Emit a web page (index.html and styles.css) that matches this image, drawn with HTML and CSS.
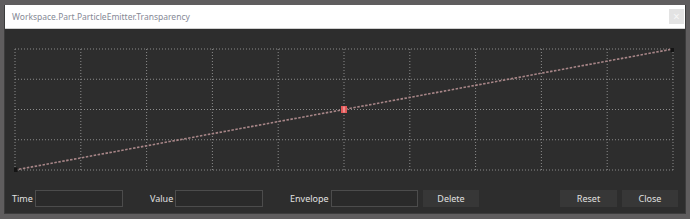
FILE: index.html
```html
<!DOCTYPE html>
<html lang="en">
<head>
    <meta charset="UTF-8">
    <title>Workspace.Part.ParticleEmitter.Transparency</title>
    <link rel="stylesheet" href="styles.css">
</head>
<body>
    <div class="dialog">
        <div class="titlebar">
            <span class="title">Workspace.Part.ParticleEmitter.Transparency</span>
            <span class="close-x">&#215;</span>
        </div>

        <div class="dialog-body">
            <svg class="graph" width="660" height="124" viewBox="0 0 660 124">
                <g class="grid">
                    <line x1="1" y1="1" x2="659" y2="1"/>
                    <line x1="1" y1="31.25" x2="659" y2="31.25"/>
                    <line x1="1" y1="61.5" x2="659" y2="61.5"/>
                    <line x1="1" y1="91.75" x2="659" y2="91.75"/>
                    <line x1="1" y1="122" x2="659" y2="122"/>
                    <line x1="1" y1="1" x2="1" y2="122"/>
                    <line x1="66.8" y1="1" x2="66.8" y2="122"/>
                    <line x1="132.6" y1="1" x2="132.6" y2="122"/>
                    <line x1="198.4" y1="1" x2="198.4" y2="122"/>
                    <line x1="264.2" y1="1" x2="264.2" y2="122"/>
                    <line x1="330" y1="1" x2="330" y2="122"/>
                    <line x1="395.8" y1="1" x2="395.8" y2="122"/>
                    <line x1="461.6" y1="1" x2="461.6" y2="122"/>
                    <line x1="527.4" y1="1" x2="527.4" y2="122"/>
                    <line x1="593.2" y1="1" x2="593.2" y2="122"/>
                    <line x1="659" y1="1" x2="659" y2="122"/>
                </g>
                <line class="curve" x1="1" y1="122" x2="659" y2="1"/>
                <rect class="key" x="-1.5" y="119.5" width="5" height="5"/>
                <rect class="key" x="656.5" y="-1" width="5" height="5"/>
                <rect class="handle" x="327" y="58" width="6" height="7"/>
                <line class="handle-mid" x1="330" y1="58.5" x2="330" y2="64.5"/>
            </svg>

            <div class="controls">
                <label class="lbl lbl-time">Time</label>
                <input class="field" type="text">
                <label class="lbl lbl-value">Value</label>
                <input class="field" type="text">
                <label class="lbl lbl-env">Envelope</label>
                <input class="field field-env" type="text">
                <button class="btn btn-delete">Delete</button>
                <span class="spacer"></span>
                <button class="btn">Reset</button>
                <button class="btn btn-close">Close</button>
            </div>
        </div>
    </div>
</body>
</html>
```

FILE: styles.css
```css
body {
    margin: 0;
    width: 690px;
    height: 219px;
    background: #5f5d5e;
    font-family: "Noto Sans", "Open Sans", sans-serif;
    overflow: hidden;
}

.dialog {
    width: 680px;
    margin: 5px 0 0 4px;
    border: 1px solid #3c3c3c;
    border-top: none;
}

.titlebar {
    height: 23px;
    background: #ffffff;
    border-bottom: 1px solid #d0d0d0;
    display: flex;
    align-items: center;
    justify-content: space-between;
    padding: 0 0 0 7px;
}

.title {
    font-size: 8.5px;
    color: #868996;
}

.close-x {
    width: 15px;
    height: 15px;
    margin-right: 1px;
    background: #e3e3e3;
    color: #f6f6f6;
    font-size: 12px;
    line-height: 15px;
    text-align: center;
}

.dialog-body {
    background: #2d2d2d;
    padding: 19px 7px 6px 7px;
}

.graph {
    display: block;
    margin-left: 2px;
}

.grid line {
    stroke: #8c8c8c;
    stroke-width: 1;
    stroke-dasharray: 1 2;
}

.curve {
    stroke: #a88688;
    stroke-width: 1.6;
    stroke-dasharray: 2.5 1.5;
}

.key {
    fill: #141414;
}

.handle {
    fill: #e45858;
}

.handle-mid {
    stroke: #f4c4c4;
    stroke-width: 1;
}

.controls {
    display: flex;
    align-items: center;
    height: 17px;
    margin-top: 18px;
}

.lbl {
    flex: none;
    white-space: nowrap;
    font-size: 9px;
    color: #e0e0e0;
}

.lbl-time {
    width: 23px;
}

.lbl-value {
    width: 25px;
    margin-left: 27px;
}

.lbl-env {
    width: 41px;
    margin-left: 27px;
}

.field {
    flex: none;
    box-sizing: border-box;
    width: 88px;
    height: 17px;
    background: #2a2a2a;
    border: 1px solid #4c4c4c;
    margin: 0;
    padding: 0;
}

.field-env {
    width: 87px;
}

.btn {
    flex: none;
    box-sizing: border-box;
    width: 57px;
    height: 17px;
    border: none;
    padding: 0;
    background: #373737;
    color: #e0e0e0;
    font-family: "Noto Sans", "Open Sans", sans-serif;
    font-size: 9px;
}

.btn-delete {
    width: 56px;
    margin-left: 5px;
}

.btn-close {
    width: 56px;
    margin-left: 5px;
}

.spacer {
    flex: 1;
}
```
